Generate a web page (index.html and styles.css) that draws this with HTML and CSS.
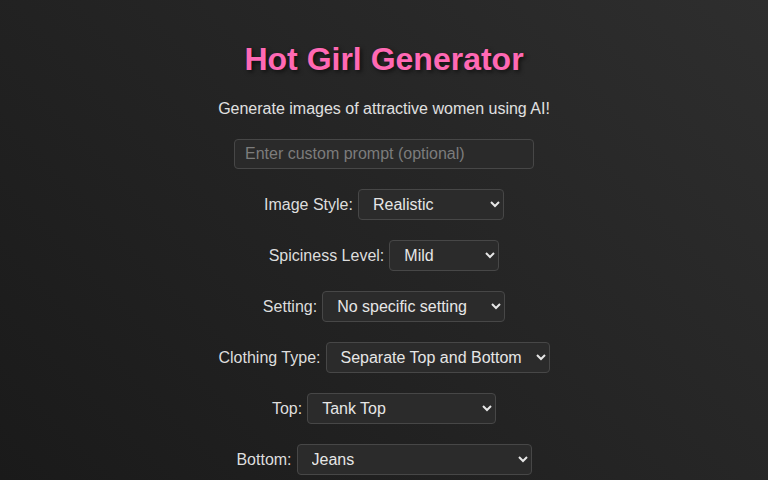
FILE: index.html
```html
<!DOCTYPE html>
<html lang="en">
<head>
    <meta charset="UTF-8">
    <meta name="viewport" content="width=device-width, initial-scale=1.0">
    <title>Hot Girl Generator</title>
    <link rel="stylesheet" href="styles.css">
</head>
<body>
    <div class="container">
        <h1>Hot Girl Generator</h1>
        <p class="subtitle">Generate images of attractive women using AI!</p>
        <input type="text" class="prompt" placeholder="Enter custom prompt (optional)">

        <div class="row">
            <label for="style">Image Style:</label>
            <select id="style" class="w-style">
                <option>Realistic</option>
                <option>Anime</option>
            </select>
        </div>
        <div class="row">
            <label for="spice">Spiciness Level:</label>
            <select id="spice" class="w-spice">
                <option>Mild</option>
                <option>Medium</option>
            </select>
        </div>
        <div class="row">
            <label for="setting">Setting:</label>
            <select id="setting" class="w-setting">
                <option>No specific setting</option>
                <option>Beach</option>
            </select>
        </div>
        <div class="row">
            <label for="clothing">Clothing Type:</label>
            <select id="clothing" class="w-clothing">
                <option>Separate Top and Bottom</option>
                <option>Dress</option>
            </select>
        </div>
        <div class="row">
            <label for="top">Top:</label>
            <select id="top" class="w-top">
                <option>Tank Top</option>
                <option>T-Shirt</option>
            </select>
        </div>
        <div class="row">
            <label for="bottom">Bottom:</label>
            <select id="bottom" class="w-bottom">
                <option>Jeans</option>
                <option>Skirt</option>
            </select>
        </div>
    </div>
</body>
</html>
```

FILE: styles.css
```css
html {
    height: 100%;
}
body {
    font-family: "Liberation Sans", Arial, sans-serif;
    margin: 0;
    padding: 41px 20px 40px;
    min-height: 100%;
    box-sizing: border-box;
    background: linear-gradient(45deg, #1a1a1a, #2e2e2e);
    color: #dddddd;
    color-scheme: dark;
}
.container {
    display: flex;
    flex-direction: column;
    align-items: center;
}
h1 {
    margin: 0;
    font-size: 32px;
    line-height: 37px;
    color: #ff69b4;
    text-shadow: 2px 2px 4px rgba(0, 0, 0, 0.6);
}
.subtitle {
    margin: 22px 0 0;
    font-size: 16px;
    line-height: 18px;
    color: #e0e0e0;
}
.prompt {
    margin-top: 21px;
    width: 300px;
    height: 30px;
    box-sizing: border-box;
    padding: 0 10px;
    font-family: inherit;
    font-size: 16px;
    color: #e0e0e0;
    background: #2a2a2a;
    border: 1px solid #474747;
    border-radius: 4px;
}
.prompt::placeholder {
    color: #7c7c7c;
}
.row {
    margin-top: 20px;
    display: flex;
    align-items: center;
    gap: 5px;
    font-size: 16px;
}
select {
    height: 31px;
    box-sizing: border-box;
    padding: 0 6px 0 10px;
    font-family: inherit;
    font-size: 16px;
    color: #e6e6e6;
    background: #2b2b2b;
    border: 1px solid #474747;
    border-radius: 4px;
}
.w-style { width: 146px; }
.w-spice { width: 110px; }
.w-setting { width: 183px; }
.w-clothing { width: 224px; }
.w-top { width: 189px; }
.w-bottom { width: 235px; }
```
